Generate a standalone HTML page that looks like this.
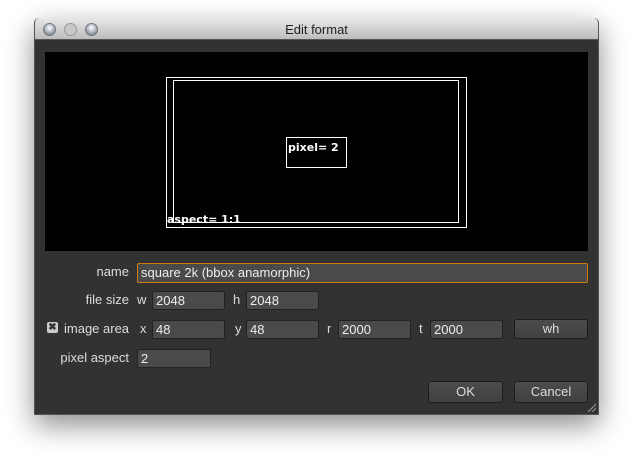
<!DOCTYPE html>
<html><head><meta charset="utf-8"><style>
*{margin:0;padding:0;box-sizing:border-box}
body{width:632px;height:463px;background:#fff;position:relative;overflow:hidden;font-family:"Liberation Sans",sans-serif}
.win{position:absolute;left:34px;top:18px;width:565px;height:397px;background:#323232;border-radius:5px 5px 0 0;box-shadow:0 10px 28px rgba(0,0,0,.45);overflow:hidden;border:1px solid #555;border-top:none}
.tb{position:absolute;left:0;top:0;width:100%;height:22px;background:linear-gradient(#e8e8e8,#bdbdbd);border-bottom:1px solid #555;text-align:center;font-size:13px;line-height:23px;color:#222}
.tl{position:absolute;top:5px;width:13px;height:13px;border-radius:50%;background:radial-gradient(circle at 50% 35%,#fff 0,#c6ccd6 35%,#7d8594 80%);border:1px solid #777}
.v{position:absolute;left:10px;top:34px;width:543px;height:199px;background:#000}
.r{position:absolute;border:1px solid #fff}
.t{position:absolute;color:#fff;font-size:11px;font-family:"DejaVu Sans",sans-serif;font-weight:bold}
.l{position:absolute;color:#ddd;font-size:12px;font-family:"Liberation Sans",sans-serif;line-height:18px;font-size:13px}
.rl{text-align:right;width:100px}
.f{position:absolute;height:19px;background:#4a4a4a;border:1px solid #222;border-radius:2px;color:#eee;font-size:13px;font-family:"Liberation Sans",sans-serif;line-height:17px;padding-left:3px}
.b{position:absolute;height:22px;background:linear-gradient(#4c4c4c,#404040);border:1px solid #1c1c1c;border-radius:3px;color:#ddd;font-size:13px;font-family:"Liberation Sans",sans-serif;text-align:center;line-height:20px}
</style></head><body>
<div class="win">
<div class="tb">Edit format
<div class="tl" style="left:8px"></div><div class="tl" style="left:29px;background:#c8c8c8;border-color:#999"></div><div class="tl" style="left:50px"></div></div>
<div class="v">
<div class="r" style="left:121px;top:25px;width:301px;height:151px"></div>
<div class="r" style="left:128px;top:28px;width:286px;height:143px"></div>
<div class="r" style="left:241px;top:85px;width:61px;height:31px"></div>
<div class="t" style="left:243px;top:89px">pixel= 2</div>
<div class="t" style="left:122px;top:161px">aspect= 1:1</div>
</div>
<div class="l rl" style="left:-6px;top:245px">name</div>
<div class="f" style="left:102px;top:245px;width:451px;border:1px solid #d07a10;height:20px">square 2k (bbox anamorphic)</div>
<div class="l rl" style="left:-6px;top:273px">file size</div>
<div class="l" style="left:102px;top:273px">w</div>
<div class="f" style="left:117px;top:273px;width:73px">2048</div>
<div class="l" style="left:198px;top:273px">h</div>
<div class="f" style="left:211px;top:273px;width:73px">2048</div>
<div style="position:absolute;left:12px;top:304px;width:11px;height:11px;background:#ccc;border-radius:2px;color:#333;font-size:10px;line-height:11px;text-align:center;font-weight:bold">✖</div>
<div class="l" style="left:29px;top:302px">image area</div>
<div class="l" style="left:105px;top:302px">x</div>
<div class="f" style="left:117px;top:302px;width:73px">48</div>
<div class="l" style="left:200px;top:302px">y</div>
<div class="f" style="left:211px;top:302px;width:73px">48</div>
<div class="l" style="left:292px;top:302px">r</div>
<div class="f" style="left:303px;top:302px;width:73px">2000</div>
<div class="l" style="left:384px;top:302px">t</div>
<div class="f" style="left:395px;top:302px;width:73px">2000</div>
<div class="b" style="left:479px;top:301px;width:74px;height:20px;line-height:18px">wh</div>
<div class="l rl" style="left:-6px;top:331px">pixel aspect</div>
<div class="f" style="left:102px;top:331px;width:74px">2</div>
<div class="b" style="left:393px;top:363px;width:75px">OK</div>
<div class="b" style="left:479px;top:363px;width:74px">Cancel</div>
<svg style="position:absolute;right:2px;bottom:2px" width="10" height="10"><path d="M2 10L10 2M6 10L10 6" stroke="#999" stroke-width="1"/></svg>
</div>
</body></html>
